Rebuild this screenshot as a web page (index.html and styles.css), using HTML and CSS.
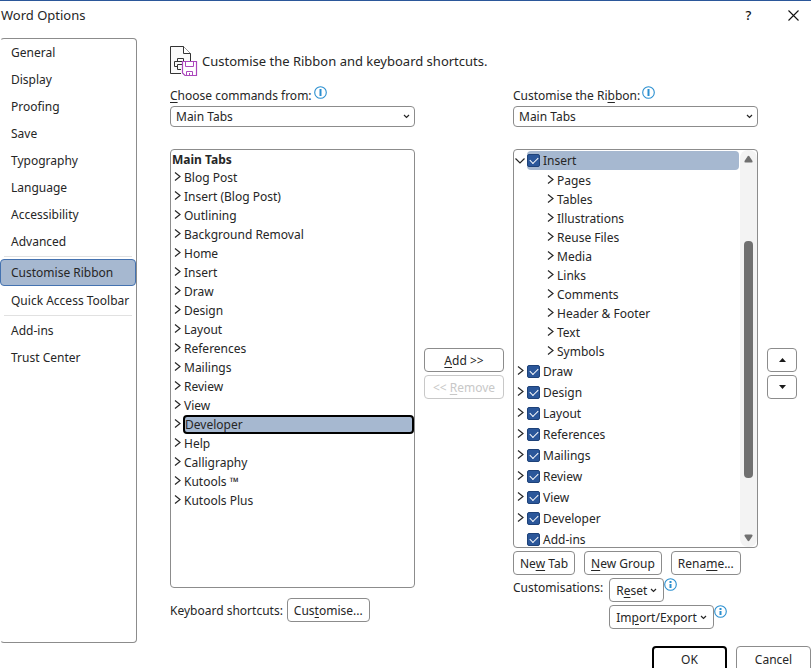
FILE: index.html
```html
<!DOCTYPE html>
<html lang="en-GB">
<head>
    <meta charset="UTF-8">
    <meta name="viewport" content="width=device-width, initial-scale=1.0">
    <title>Word Options</title>
    <link rel="stylesheet" href="styles.css">
</head>
<body>
    <!-- shared icons -->
    <svg class="sprite" aria-hidden="true">
        <symbol id="right" viewBox="0 0 7 10"><path d="M1 .5l5 4-5 4" fill="none" stroke="#262626" stroke-width="1.2"/></symbol>
        <symbol id="open" viewBox="0 0 10 6"><path d="M.5 .5L5 5 9.500 .5" fill="none" stroke="#262626" stroke-width="1.2"/></symbol>
        <symbol id="down" viewBox="0 0 7 5"><path d="M1 1l2.500 2.500L6 1" fill="none" stroke="#262626" stroke-width="1.2"/></symbol>
        <symbol id="info-bar" viewBox="0 0 13 13"><circle cx="6.500" cy="6.500" r="5.800" fill="#fff" stroke="#2a8fd0" stroke-width="1.100"/><path d="M6.500 3v7" stroke="#2a8fd0" stroke-width="2"/></symbol>
        <symbol id="info" viewBox="0 0 13 13"><circle cx="6.500" cy="6.500" r="5.800" fill="#fff" stroke="#2a8fd0" stroke-width="1.100"/><path d="M6.500 3v2M6.500 6v4" stroke="#2a8fd0" stroke-width="2"/></symbol>
    </svg>

    <div class="titlebar">
        <div class="title">Word Options</div>
        <button class="title-button help" aria-label="Help">?</button>
        <button class="title-button" aria-label="Close">
            <svg width="11" height="11" viewBox="0 0 11 11"><path d="M.5 .5l10 10M10.500 .5l-10 10" stroke="#111" stroke-width="1.100"/></svg>
        </button>
    </div>

    <div class="main">
        <nav class="sidebar">
            <a href="#">General</a>
            <a href="#">Display</a>
            <a href="#">Proofing</a>
            <a href="#">Save</a>
            <a href="#">Typography</a>
            <a href="#">Language</a>
            <a href="#">Accessibility</a>
            <a href="#">Advanced</a>
            <hr>
            <a href="#" class="active">Customise Ribbon</a>
            <a href="#">Quick Access Toolbar</a>
            <hr>
            <a href="#">Add-ins</a>
            <a href="#">Trust Center</a>
        </nav>

        <div class="content">
            <div class="heading">
                <svg width="28" height="31" viewBox="0 0 28 31" fill="none">
                    <path d="M11 27.500H.5V.5h13l7 7V15" fill="#fafafa" stroke="#333"/>
                    <path d="M13.500 .5v7h7" fill="#fff" stroke="#333"/>
                    <path d="M7.500 15.500v-3h6v3M12 15.500H4.500v5h3M12 18.500H7.500v5H11" stroke="#333"/>
                    <path d="M12.500 15.500h14v14H15l-2.500-2.500z" fill="#fff" stroke="#ab47bc" stroke-width="1.200"/>
                    <path d="M15.500 15.500v5h8v-5M16.500 29.500v-4h6v4M19.500 27v2" stroke="#ab47bc"/>
                </svg>
                <h1>Customise the Ribbon and keyboard shortcuts.</h1>
            </div>

            <div class="columns">
                <div class="column">
                    <div class="caption">
                        <label for="commands"><u>C</u>hoose commands from:</label>
                        <svg class="info"><use href="#info-bar"/></svg>
                    </div>
                    <div class="select">
                        <select id="commands"><option>Main Tabs</option></select>
                        <svg class="arrow"><use href="#down"/></svg>
                    </div>
                    <div class="list commands-list">
                        <div class="list-title">Main Tabs</div>
                        <ul class="tree">
                            <li><svg class="right"><use href="#right"/></svg><span>Blog Post</span></li>
                            <li><svg class="right"><use href="#right"/></svg><span>Insert (Blog Post)</span></li>
                            <li><svg class="right"><use href="#right"/></svg><span>Outlining</span></li>
                            <li><svg class="right"><use href="#right"/></svg><span>Background Removal</span></li>
                            <li><svg class="right"><use href="#right"/></svg><span>Home</span></li>
                            <li><svg class="right"><use href="#right"/></svg><span>Insert</span></li>
                            <li><svg class="right"><use href="#right"/></svg><span>Draw</span></li>
                            <li><svg class="right"><use href="#right"/></svg><span>Design</span></li>
                            <li><svg class="right"><use href="#right"/></svg><span>Layout</span></li>
                            <li><svg class="right"><use href="#right"/></svg><span>References</span></li>
                            <li><svg class="right"><use href="#right"/></svg><span>Mailings</span></li>
                            <li><svg class="right"><use href="#right"/></svg><span>Review</span></li>
                            <li><svg class="right"><use href="#right"/></svg><span>View</span></li>
                            <li class="selected"><svg class="right"><use href="#right"/></svg><span>Developer</span></li>
                            <li><svg class="right"><use href="#right"/></svg><span>Help</span></li>
                            <li><svg class="right"><use href="#right"/></svg><span>Calligraphy</span></li>
                            <li><svg class="right"><use href="#right"/></svg><span>Kutools ™</span></li>
                            <li><svg class="right"><use href="#right"/></svg><span>Kutools Plus</span></li>
                        </ul>
                    </div>
                    <div class="keyboard">
                        <span>Keyboard shortcuts:</span>
                        <button class="button">Cus<u>t</u>omise...</button>
                    </div>
                </div>

                <div class="transfer">
                    <button class="button"><u>A</u>dd &gt;&gt;</button>
                    <button class="button" disabled>&lt;&lt; <u>R</u>emove</button>
                </div>

                <div class="column">
                    <div class="caption">
                        <label for="ribbon">Customise the Ri<u>b</u>bon:</label>
                        <svg class="info"><use href="#info-bar"/></svg>
                    </div>
                    <div class="select">
                        <select id="ribbon"><option>Main Tabs</option></select>
                        <svg class="arrow"><use href="#down"/></svg>
                    </div>
                    <div class="list ribbon-list">
                        <ul class="tabs">
                            <li>
                                <div class="tab current"><svg class="open"><use href="#open"/></svg><label><input type="checkbox" checked>Insert</label></div>
                                <ul class="tree groups">
                                    <li><svg class="right"><use href="#right"/></svg><span>Pages</span></li>
                                    <li><svg class="right"><use href="#right"/></svg><span>Tables</span></li>
                                    <li><svg class="right"><use href="#right"/></svg><span>Illustrations</span></li>
                                    <li><svg class="right"><use href="#right"/></svg><span>Reuse Files</span></li>
                                    <li><svg class="right"><use href="#right"/></svg><span>Media</span></li>
                                    <li><svg class="right"><use href="#right"/></svg><span>Links</span></li>
                                    <li><svg class="right"><use href="#right"/></svg><span>Comments</span></li>
                                    <li><svg class="right"><use href="#right"/></svg><span>Header &amp; Footer</span></li>
                                    <li><svg class="right"><use href="#right"/></svg><span>Text</span></li>
                                    <li><svg class="right"><use href="#right"/></svg><span>Symbols</span></li>
                                </ul>
                            </li>
                            <li class="tab"><svg class="right"><use href="#right"/></svg><label><input type="checkbox" checked>Draw</label></li>
                            <li class="tab"><svg class="right"><use href="#right"/></svg><label><input type="checkbox" checked>Design</label></li>
                            <li class="tab"><svg class="right"><use href="#right"/></svg><label><input type="checkbox" checked>Layout</label></li>
                            <li class="tab"><svg class="right"><use href="#right"/></svg><label><input type="checkbox" checked>References</label></li>
                            <li class="tab"><svg class="right"><use href="#right"/></svg><label><input type="checkbox" checked>Mailings</label></li>
                            <li class="tab"><svg class="right"><use href="#right"/></svg><label><input type="checkbox" checked>Review</label></li>
                            <li class="tab"><svg class="right"><use href="#right"/></svg><label><input type="checkbox" checked>View</label></li>
                            <li class="tab"><svg class="right"><use href="#right"/></svg><label><input type="checkbox" checked>Developer</label></li>
                            <li class="tab"><svg class="right"></svg><label><input type="checkbox" checked>Add-ins</label></li>
                        </ul>
                        <div class="scrollbar">
                            <svg width="9" height="8" viewBox="0 0 9 8"><path d="M3.500 1.500Q4.500 0 5.500 1.500L8.500 6Q9 7.500 7.500 7.500h-6Q0 7.500 .5 6z" fill="#707070"/></svg>
                            <div class="thumb"></div>
                            <svg width="9" height="8" viewBox="0 0 9 8"><path d="M3.500 6.500Q4.500 8 5.500 6.500L8.500 2Q9 .5 7.500 .5h-6Q0 .5 .5 2z" fill="#707070"/></svg>
                        </div>
                    </div>
                    <div class="tab-actions">
                        <button class="button">Ne<u>w</u> Tab</button>
                        <button class="button"><u>N</u>ew Group</button>
                        <button class="button">Rena<u>m</u>e...</button>
                    </div>
                    <div class="customisations">
                        <span>Customisations:</span>
                        <div class="menus">
                            <div class="menu">
                                <button class="button">R<u>e</u>set <svg class="arrow"><use href="#down"/></svg></button>
                                <svg class="info"><use href="#info"/></svg>
                            </div>
                            <div class="menu">
                                <button class="button">Im<u>p</u>ort/Export <svg class="arrow"><use href="#down"/></svg></button>
                                <svg class="info"><use href="#info"/></svg>
                            </div>
                        </div>
                    </div>
                </div>

                <div class="order">
                    <button class="button" aria-label="Move up"><svg width="7" height="4" viewBox="0 0 7 4"><path d="M0 4l3.500-4L7 4z" fill="#1a1a1a"/></svg></button>
                    <button class="button" aria-label="Move down"><svg width="7" height="4" viewBox="0 0 7 4"><path d="M0 0l3.500 4L7 0z" fill="#1a1a1a"/></svg></button>
                </div>
            </div>
        </div>
    </div>

    <div class="footer">
        <button class="button default">OK</button>
        <button class="button">Cancel</button>
    </div>
</body>
</html>
```
FILE: styles.css
```css
* {
    box-sizing: border-box;
}
html {
    height: 100%;
    overflow: hidden;
}
body {
    margin: 0;
    border-top: 1px solid #2b579a;
    background-color: #ffffff;
    color: #262626;
    font-family: "Noto Sans", "Open Sans", sans-serif;
    font-size: 12px;
    line-height: 19px;
}
ul {
    list-style: none;
    margin: 0;
    padding: 0;
}
u {
    text-underline-offset: 2px;
}
svg {
    flex: none;
}
.sprite {
    display: none;
}

/* title bar */
.titlebar {
    display: flex;
    align-items: center;
    height: 28px;
    margin-bottom: 9px;
    padding-left: 1px;
}
.title {
    flex: 1;
    font-size: 13px;
}
.title-button {
    width: 35px;
    height: 28px;
    padding: 0;
    border: none;
    background: transparent;
    color: #111111;
    font-family: inherit;
    font-size: 13px;
    font-weight: 500;
}
.title-button.help {
    width: 55px;
}
.title-button svg {
    display: block;
    margin: 0 auto;
}

.main {
    display: flex;
}

/* category list */
.sidebar {
    flex: none;
    width: 137px;
    border: 1px solid #8c8c8c;
    border-left-color: transparent;
    border-radius: 4px;
}
.sidebar a {
    display: block;
    margin: 0 0 0 -1px;
    padding: 3px 10px;
    border: 1px solid transparent;
    border-radius: 4px;
    color: inherit;
    text-decoration: none;
    white-space: nowrap;
}
.sidebar a.active {
    margin: 2px 0 1px -1px;
    border-color: #4472b0;
    background-color: #a6b8d0;
}
.sidebar hr {
    height: 1px;
    margin: 1px 4px 1px 3px;
    border: none;
    background-color: #e1e1e1;
}

/* page */
.content {
    flex: 1;
    padding: 8px 14px 14px 33px;
}
.heading {
    display: flex;
    align-items: center;
    gap: 4px;
    height: 31px;
    margin-bottom: 9px;
}
.heading h1 {
    margin: 0;
    font-size: 13px;
    font-weight: 400;
}
.columns {
    display: grid;
    grid-template-columns: 1fr 80px 1fr 30px;
    column-gap: 9px;
}
.caption {
    display: flex;
    gap: 2px;
    height: 20px;
}
.info {
    width: 13px;
    height: 13px;
}
.select {
    position: relative;
    margin-bottom: 22px;
}
.select select {
    display: block;
    width: 100%;
    height: 21px;
    padding: 0 5px;
    appearance: none;
    border: 1px solid #8c8c8c;
    border-radius: 4px;
    background-color: #ffffff;
    color: inherit;
    font-family: inherit;
    font-size: 12px;
}
.select .arrow {
    position: absolute;
    right: 5px;
    top: 8px;
}
.arrow {
    width: 7px;
    height: 5px;
}
.list {
    border: 1px solid #8c8c8c;
    border-radius: 4px;
    overflow: hidden;
}
.commands-list {
    height: 439px;
}
.list-title {
    height: 18px;
    padding-left: 1px;
    font-weight: 700;
}
.tree li {
    display: flex;
    align-items: center;
    gap: 2px;
    height: 19px;
    padding-left: 3px;
}
.tree span {
    flex: 1;
    padding-left: 1px;
}
.right {
    width: 7px;
    height: 10px;
    margin-bottom: 2px;
}
.tree .selected span {
    height: 19px;
    padding-left: 0;
    border: 2px solid #000000;
    border-radius: 4px;
    background-color: #a6b8d0;
    line-height: 16px;
}

/* ribbon tabs */
.ribbon-list {
    display: flex;
    height: 399px;
}
.tabs {
    flex: 1;
}
.tab {
    display: flex;
    align-items: center;
    gap: 3px;
    height: 21px;
    padding-left: 3px;
}
.tab label {
    flex: 1;
    display: flex;
    align-items: center;
    gap: 3px;
}
.tab.current {
    gap: 2px;
    padding-left: 1px;
}
.tab.current label {
    border-radius: 4px;
    background-color: #a6b8d0;
}
.open {
    width: 10px;
    height: 6px;
}
.tab input {
    display: grid;
    place-items: center;
    width: 13px;
    height: 13px;
    margin: 0;
    appearance: none;
    border: 1px solid #1e4279;
    border-radius: 2px;
    background-color: #2b579a;
}
.tab input:checked::after {
    content: "";
    width: 7px;
    height: 4px;
    margin-bottom: 2px;
    border-left: 1px solid #ffffff;
    border-bottom: 1px solid #ffffff;
    transform: rotate(-45deg);
}
.groups li {
    padding-left: 33px;
}
.scrollbar {
    display: flex;
    flex-direction: column;
    align-items: center;
    width: 17px;
    margin-left: 1px;
    padding: 5px 0;
    border-radius: 8px;
    background-color: #f3f3f3;
}
.thumb {
    width: 9px;
    height: 237px;
    margin: 78px 0 auto;
    border-radius: 4px;
    background-color: #707070;
}

/* buttons */
.button {
    height: 24px;
    padding: 0 6px;
    border: 1px solid #8c8c8c;
    border-radius: 4px;
    background-color: #ffffff;
    color: inherit;
    font-family: inherit;
    font-size: 12px;
    white-space: nowrap;
}
.button:disabled {
    border-color: #c8c8c8;
    color: #c8c8c8;
}
.transfer,
.order {
    display: flex;
    flex-direction: column;
    justify-content: center;
    gap: 3px;
    padding-top: 32px;
}
.order .button {
    display: flex;
    align-items: center;
    justify-content: center;
    padding: 0;
}
.keyboard {
    display: flex;
    align-items: center;
    gap: 4px;
    margin-top: 10px;
}
.tab-actions {
    display: flex;
    gap: 9px;
    margin-top: 3px;
}
.customisations {
    display: flex;
    gap: 6px;
    margin-top: 3px;
}
.menus {
    display: flex;
    flex-direction: column;
    gap: 3px;
}
.menu {
    display: flex;
}
.menu .button {
    display: flex;
    align-items: center;
}
.menu .arrow {
    margin-left: 3px;
}
.footer {
    display: flex;
    justify-content: flex-end;
    gap: 9px;
    padding-top: 3px;
}
.footer .button {
    width: 75px;
    height: 26px;
}
.footer .default {
    border: 2px solid #000000;
}
```
